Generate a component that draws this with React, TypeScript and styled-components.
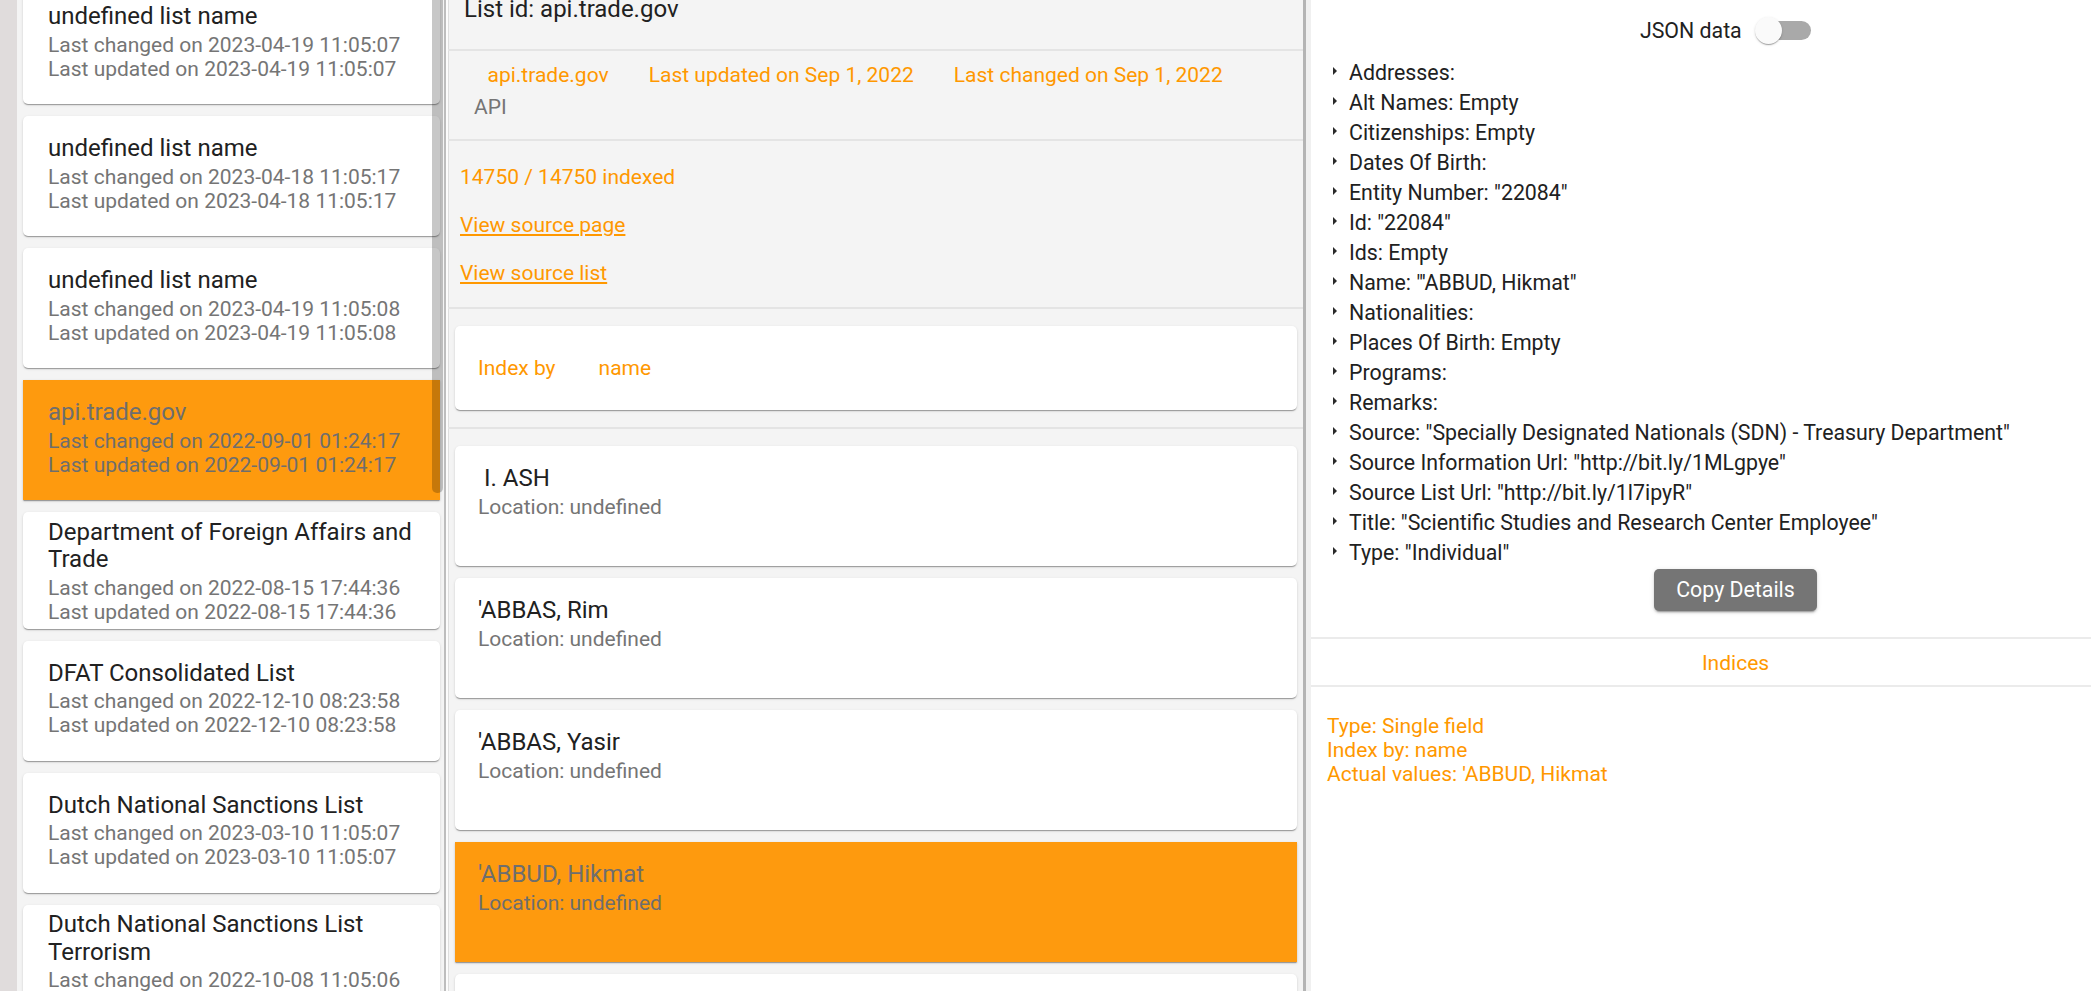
import React from 'react';
import styled, { createGlobalStyle } from 'styled-components';

const ORANGE = '#ff9800';
const ORANGE_BG = '#fe9a0e';
const DARK = '#212121';
const GRAY = '#757575';
const SEL_TEXT = '#6e6e6e';
const SHADOW =
  '0px 2px 1px -1px rgba(0,0,0,0.2), 0px 1px 1px 0px rgba(0,0,0,0.14), 0px 1px 3px 0px rgba(0,0,0,0.12)';

const GlobalStyle = createGlobalStyle`
  html, body { margin: 0; padding: 0; overflow: hidden; background: #fff; }
  body { font-family: Roboto, "Noto Sans", Arial, sans-serif; color: ${DARK}; }
  * { box-sizing: border-box; }
`;

const Page = styled.div`
  display: grid;
  grid-template-columns: 17px 429px 860px 854px;
  width: 2160px;
  height: 991px;
  overflow: hidden;
`;

const Strip = styled.div`
  background: #e0dcdc;
`;

/* ---------- left list ---------- */
const ListColumn = styled.div`
  position: relative;
  background: #f4f4f4;
  border-right: 2px solid #bdbdbd;
  overflow: hidden;
`;

const ListStack = styled.div`
  display: flex;
  flex-direction: column;
  gap: 12px;
  margin-top: -16px;
  padding: 0 4px 0 6px;
`;

const ListCard = styled.div<{ $selected?: boolean; $compact?: boolean }>`
  min-height: ${(p) => (p.$compact ? '0' : '120px')};
  padding: ${(p) => (p.$compact ? '6.5px 20px 4.5px 25px' : '19px 20px 4px 25px')};
  background: ${(p) => (p.$selected ? ORANGE_BG : '#fff')};
  border-radius: ${(p) => (p.$selected ? '0' : '5px')};
  box-shadow: ${SHADOW};
`;

const CardTitle = styled.div<{ $selected?: boolean }>`
  font-size: 24px;
  line-height: 27.6px;
  margin-bottom: 2px;
  color: ${(p) => (p.$selected ? SEL_TEXT : DARK)};
`;

const CardSub = styled.div<{ $selected?: boolean }>`
  font-size: 21px;
  line-height: 24.2px;
  color: ${(p) => (p.$selected ? SEL_TEXT : GRAY)};
`;

const ScrollThumb = styled.div`
  position: absolute;
  left: 415px;
  top: 0;
  width: 10.5px;
  height: 493px;
  border-radius: 0 0 5px 5px;
  background: rgba(0, 0, 0, 0.22);
`;

/* ---------- middle ---------- */
const Middle = styled.div`
  background: #f4f4f4;
  border-left: 2px solid #fcfcfc;
  border-right: 3px solid #b4b4b4;
  box-shadow: inset 1px 0 0 #dedede;
  overflow: hidden;
  display: flex;
  flex-direction: column;
`;

const Section = styled.div`
  border-bottom: 2px solid #e4e4e4;
`;

const HeaderSection = styled(Section)`
  margin-top: -15px;
  padding: 10px 16px 25.5px;
  font-size: 24px;
  line-height: 28px;
  color: ${DARK};
`;

const ChipsSection = styled(Section)`
  padding: 8.5px 0 15.5px;
`;

const ChipRow = styled.div<{ $inset: number }>`
  display: flex;
  height: 32px;
  align-items: center;
  padding-left: ${(p) => p.$inset}px;
`;

const Chip = styled.span<{ $muted?: boolean; $pad: number }>`
  padding: 0 ${(p) => p.$pad}px;
  font-size: 21px;
  line-height: 32px;
  color: ${(p) => (p.$muted ? GRAY : ORANGE)};
  white-space: nowrap;
`;

const StatsSection = styled(Section)`
  display: flex;
  flex-direction: column;
  gap: 23px;
  padding: 24px 12px 21px;
`;

const OrangeLine = styled.div`
  font-size: 21px;
  line-height: 25px;
  color: ${ORANGE};
`;

const SourceLink = styled.a`
  font-size: 21px;
  line-height: 25px;
  color: ${ORANGE};
  text-decoration: underline;
  align-self: flex-start;
  cursor: pointer;
`;

const IndexSection = styled(Section)`
  padding: 17.5px 6px 16.5px 6.5px;
`;

const IndexCard = styled.div`
  height: 84px;
  display: flex;
  align-items: center;
  gap: 43px;
  padding-left: 23.5px;
  background: #fff;
  border-radius: 5px;
  box-shadow: ${SHADOW};
  font-size: 21px;
  color: ${ORANGE};
`;

const PeopleList = styled.div`
  display: flex;
  flex-direction: column;
  gap: 12px;
  padding: 17.5px 6px 0 6.5px;
`;

const PersonCard = styled.div<{ $selected?: boolean }>`
  height: 120px;
  flex-shrink: 0;
  padding: 18.8px 20px 0 23.5px;
  background: ${(p) => (p.$selected ? ORANGE_BG : '#fff')};
  border-radius: ${(p) => (p.$selected ? '0' : '5px')};
  box-shadow: ${SHADOW};
`;

const PersonName = styled.div<{ $selected?: boolean }>`
  font-size: 24px;
  line-height: 27.6px;
  margin-bottom: 2.2px;
  white-space: pre;
  color: ${(p) => (p.$selected ? SEL_TEXT : DARK)};
`;

const PersonSub = styled.div<{ $selected?: boolean }>`
  font-size: 21px;
  line-height: 24px;
  color: ${(p) => (p.$selected ? SEL_TEXT : GRAY)};
`;

/* ---------- right ---------- */
const Detail = styled.div`
  background: #fff;
  border-left: 5px solid #f0f0f0;
  display: flex;
  flex-direction: column;
`;

const DetailTop = styled.div`
  border-bottom: 2px solid #ebebeb;
  padding-bottom: 26px;
  display: flex;
  flex-direction: column;
`;

const JsonRow = styled.div`
  display: flex;
  justify-content: center;
  align-items: center;
  height: 30px;
  margin-top: 15px;
  gap: 13.4px;
`;

const JsonLabel = styled.span`
  font-size: 21.33px;
  color: ${DARK};
`;

const Switch = styled.span`
  position: relative;
  width: 56px;
  height: 30px;
  margin-right: 20px;
`;

const SwitchTrack = styled.span`
  position: absolute;
  left: 9px;
  top: 5.5px;
  width: 47px;
  height: 19px;
  border-radius: 10px;
  background: #a9a9a9;
`;

const SwitchThumb = styled.span`
  position: absolute;
  left: 0;
  top: 1.5px;
  width: 27px;
  height: 27px;
  border-radius: 50%;
  background: #fafafa;
  box-shadow: 0px 2px 1px -1px rgba(0,0,0,0.2), 0px 1px 1px 0px rgba(0,0,0,0.14), 0px 1px 3px 0px rgba(0,0,0,0.12);
`;

const Tree = styled.ul`
  list-style: none;
  margin: 12px 0 0;
  padding: 0 0 0 21.5px;
`;

const TreeItem = styled.li`
  display: flex;
  align-items: center;
  height: 30px;
  font-size: 21.33px;
  color: ${DARK};
  white-space: nowrap;
`;

const Caret = styled.span`
  width: 0;
  height: 0;
  border-top: 4px solid transparent;
  border-bottom: 4px solid transparent;
  border-left: 4.5px solid #2a2a2a;
  margin-right: 12.5px;
  margin-top: -3px;
`;

const CopyButton = styled.button`
  align-self: center;
  margin-top: 2px;
  height: 41.5px;
  padding: 0 22.5px;
  border: none;
  border-radius: 5px;
  background: #757575;
  color: #fff;
  font-family: Roboto, "Noto Sans", Arial, sans-serif;
  font-size: 21.33px;
  cursor: pointer;
  box-shadow: 0px 3px 1px -2px rgba(0,0,0,0.2), 0px 2px 2px 0px rgba(0,0,0,0.14), 0px 1px 5px 0px rgba(0,0,0,0.12);
`;

const IndicesTab = styled.div`
  height: 48.2px;
  padding-top: 3px;
  border-bottom: 2px solid #ebebeb;
  display: flex;
  align-items: center;
  justify-content: center;
  font-size: 21px;
  color: ${ORANGE};
`;

const IndexInfo = styled.div`
  padding: 27.3px 16px 0;
  font-size: 21px;
  line-height: 24px;
  color: ${ORANGE};
`;

type ListEntry = { name: string; changed: string; updated: string; selected?: boolean; compact?: boolean };

const lists: ListEntry[] = [
  { name: 'undefined list name', changed: '2023-04-19 11:05:07', updated: '2023-04-19 11:05:07' },
  { name: 'undefined list name', changed: '2023-04-18 11:05:17', updated: '2023-04-18 11:05:17' },
  { name: 'undefined list name', changed: '2023-04-19 11:05:08', updated: '2023-04-19 11:05:08' },
  { name: 'api.trade.gov', changed: '2022-09-01 01:24:17', updated: '2022-09-01 01:24:17', selected: true },
  { name: 'Department of Foreign Affairs and Trade', changed: '2022-08-15 17:44:36', updated: '2022-08-15 17:44:36', compact: true },
  { name: 'DFAT Consolidated List', changed: '2022-12-10 08:23:58', updated: '2022-12-10 08:23:58' },
  { name: 'Dutch National Sanctions List', changed: '2023-03-10 11:05:07', updated: '2023-03-10 11:05:07' },
  { name: 'Dutch National Sanctions List Terrorism', changed: '2022-10-08 11:05:06', updated: '2022-10-08 11:05:06', compact: true },
];

const people = [
  { name: ' I. ASH' },
  { name: "'ABBAS, Rim" },
  { name: "'ABBAS, Yasir" },
  { name: "'ABBUD, Hikmat", selected: true },
  { name: "'ABBUD, Sami" },
];

const fields = [
  'Addresses:',
  'Alt Names: Empty',
  'Citizenships: Empty',
  'Dates Of Birth:',
  'Entity Number: "22084"',
  'Id: "22084"',
  'Ids: Empty',
  'Name: "\'ABBUD, Hikmat"',
  'Nationalities:',
  'Places Of Birth: Empty',
  'Programs:',
  'Remarks:',
  'Source: "Specially Designated Nationals (SDN) - Treasury Department"',
  'Source Information Url: "http://bit.ly/1MLgpye"',
  'Source List Url: "http://bit.ly/1l7ipyR"',
  'Title: "Scientific Studies and Research Center Employee"',
  'Type: "Individual"',
];

export default function App() {
  return (
    <>
      <GlobalStyle />
      <Page>
        <Strip />
        <ListColumn>
          <ListStack>
            {lists.map((l, i) => (
              <ListCard key={i} $selected={l.selected} $compact={l.compact}>
                <CardTitle $selected={l.selected}>{l.name}</CardTitle>
                <CardSub $selected={l.selected}>Last changed on {l.changed}</CardSub>
                <CardSub $selected={l.selected}>Last updated on {l.updated}</CardSub>
              </ListCard>
            ))}
          </ListStack>
          <ScrollThumb />
        </ListColumn>

        <Middle>
          <HeaderSection>List id: api.trade.gov</HeaderSection>
          <ChipsSection>
            <ChipRow $inset={19.5}>
              <Chip $pad={20}>api.trade.gov</Chip>
              <Chip $pad={20}>Last updated on Sep 1, 2022</Chip>
              <Chip $pad={20}>Last changed on Sep 1, 2022</Chip>
            </ChipRow>
            <ChipRow $inset={26}>
              <Chip $muted $pad={0}>API</Chip>
            </ChipRow>
          </ChipsSection>
          <StatsSection>
            <OrangeLine>14750 / 14750 indexed</OrangeLine>
            <SourceLink>View source page</SourceLink>
            <SourceLink>View source list</SourceLink>
          </StatsSection>
          <IndexSection>
            <IndexCard>
              <span>Index by</span>
              <span>name</span>
            </IndexCard>
          </IndexSection>
          <PeopleList>
            {people.map((p, i) => (
              <PersonCard key={i} $selected={p.selected}>
                <PersonName $selected={p.selected}>{p.name}</PersonName>
                <PersonSub $selected={p.selected}>Location: undefined</PersonSub>
              </PersonCard>
            ))}
          </PeopleList>
        </Middle>

        <Detail>
          <DetailTop>
            <JsonRow>
              <JsonLabel>JSON data</JsonLabel>
              <Switch>
                <SwitchTrack />
                <SwitchThumb />
              </Switch>
            </JsonRow>
            <Tree>
              {fields.map((f, i) => (
                <TreeItem key={i}>
                  <Caret />
                  {f}
                </TreeItem>
              ))}
            </Tree>
            <CopyButton>Copy Details</CopyButton>
          </DetailTop>
          <IndicesTab>Indices</IndicesTab>
          <IndexInfo>
            <div>Type: Single field</div>
            <div>Index by: name</div>
            <div>Actual values: 'ABBUD, Hikmat</div>
          </IndexInfo>
        </Detail>
      </Page>
    </>
  );
}
